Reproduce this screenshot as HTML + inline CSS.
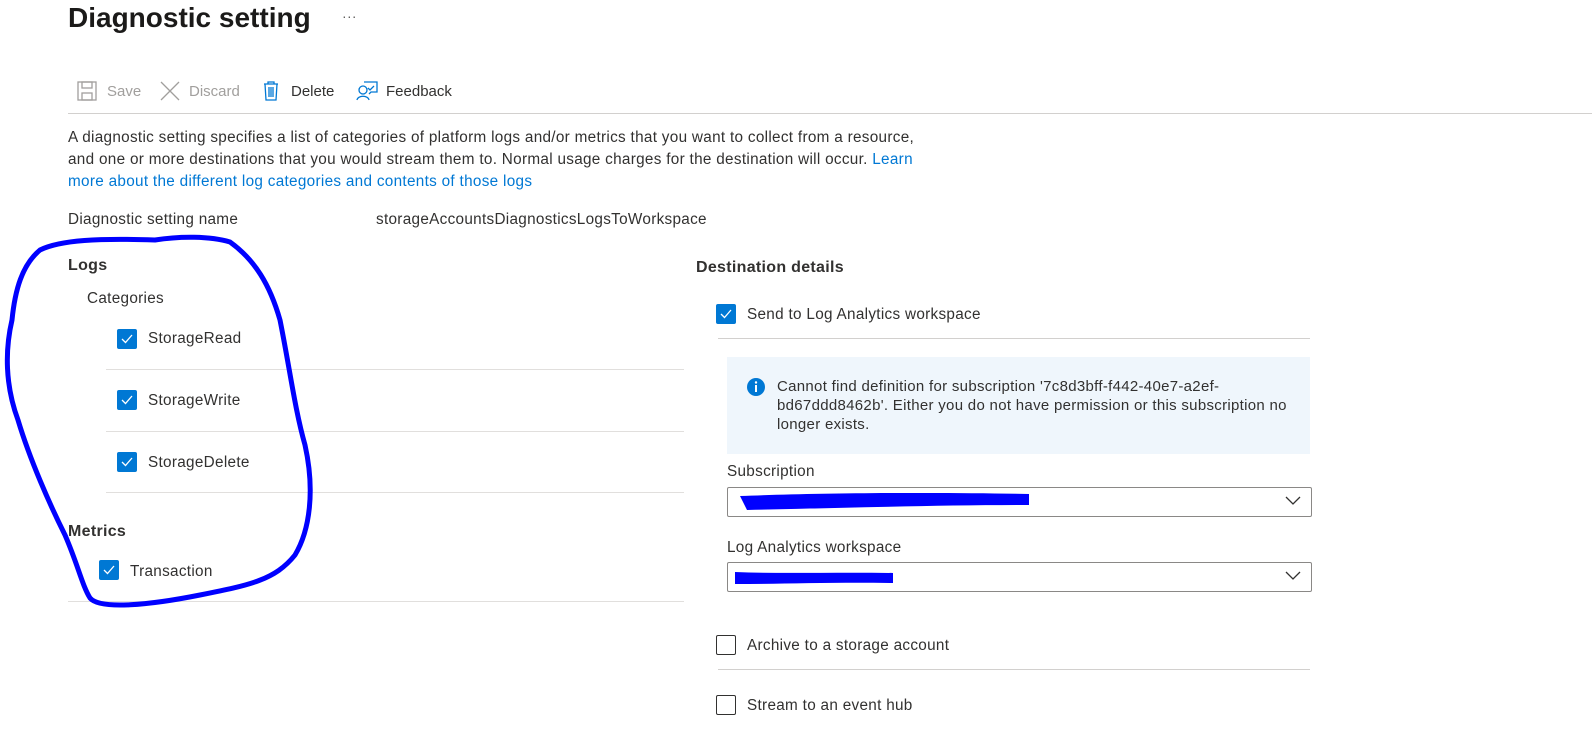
<!DOCTYPE html>
<html><head><style>
body{margin:0;width:1592px;height:734px;background:#fff;font-family:"Liberation Sans",sans-serif;color:#323130;position:relative;overflow:hidden;font-size:15.3px;letter-spacing:0.3px}
.a{position:absolute;white-space:nowrap}
.cb{position:absolute;width:20px;height:20px;background:#0078d4;border-radius:2px}
.cb svg{position:absolute;left:3px;top:3px}
.ub{position:absolute;width:18px;height:18px;border:1px solid #323130;border-radius:2px}
.hr{position:absolute;height:1px;background:#e1dfdd}
.sel{position:absolute;left:727px;width:583px;height:28px;border:1px solid #8a8886;border-radius:2px}
.t{letter-spacing:0;font-size:15px}
</style></head><body>
<div class="a" style="left:68px;top:2px;font-size:28px;font-weight:bold;color:#1b1a19;letter-spacing:0">Diagnostic setting</div>
<div class="a" style="left:342px;top:8px;font-size:14px;color:#605e5c">···</div>
<svg class="a" style="left:77px;top:81px" width="20" height="20" viewBox="0 0 20 20" fill="none" stroke="#a19f9d" stroke-width="1.3"><rect x="1" y="1" width="18" height="18"/><rect x="5" y="1" width="10" height="6"/><rect x="5" y="12" width="10" height="7"/></svg>
<div class="a t" style="left:107px;top:83px;color:#a19f9d">Save</div>
<svg class="a" style="left:160px;top:81px" width="20" height="20" stroke="#a19f9d" stroke-width="1.3"><path d="M1 1L19 19M19 1L1 19"/></svg>
<div class="a t" style="left:189px;top:83px;color:#a19f9d">Discard</div>
<svg class="a" style="left:263px;top:81px" width="16" height="20" fill="none" stroke="#0078d4" stroke-width="1.3"><path d="M1 3H15M5 3V1H11V3M2 3L3 19H13L14 3M6 6V16M8 6V16M10 6V16"/></svg>
<div class="a t" style="left:291px;top:83px">Delete</div>
<svg class="a" style="left:356px;top:81px" width="22" height="20" fill="none" stroke="#0078d4" stroke-width="1.3"><circle cx="7" cy="9" r="4"/><path d="M1 19C2 14 12 14 13 19M8 1H21V11H15L13 13"/><path d="M12 7L14 9L18 5"/></svg>
<div class="a t" style="left:386px;top:83px">Feedback</div>
<div class="hr" style="left:68px;top:113px;width:1524px;background:#d2d0ce"></div>
<div class="a" style="left:68px;top:127px;line-height:22px">A diagnostic setting specifies a list of categories of platform logs and/or metrics that you want to collect from a resource,<br>and one or more destinations that you would stream them to. Normal usage charges for the destination will occur. <span style="color:#0078d4">Learn</span><br><span style="color:#0078d4">more about the different log categories and contents of those logs</span></div>
<div class="a" style="left:68px;top:211px">Diagnostic setting name</div>
<div class="a" style="left:376px;top:211px">storageAccountsDiagnosticsLogsToWorkspace</div>
<div class="a" style="left:68px;top:257px;font-weight:bold;font-size:16px">Logs</div>
<div class="a" style="left:87px;top:290px">Categories</div>
<div class="cb" style="left:117px;top:329px"><svg width="14" height="14"><path d="M2 7L5.5 10.5L12 3" stroke="#fff" fill="none" stroke-width="1.3"/></svg></div>
<div class="a" style="left:148px;top:330px">StorageRead</div>
<div class="hr" style="left:106px;top:369px;width:578px"></div>
<div class="cb" style="left:117px;top:390px"><svg width="14" height="14"><path d="M2 7L5.5 10.5L12 3" stroke="#fff" fill="none" stroke-width="1.3"/></svg></div>
<div class="a" style="left:148px;top:392px">StorageWrite</div>
<div class="hr" style="left:106px;top:431px;width:578px"></div>
<div class="cb" style="left:117px;top:452px"><svg width="14" height="14"><path d="M2 7L5.5 10.5L12 3" stroke="#fff" fill="none" stroke-width="1.3"/></svg></div>
<div class="a" style="left:148px;top:454px">StorageDelete</div>
<div class="hr" style="left:106px;top:492px;width:578px"></div>
<div class="a" style="left:68px;top:523px;font-weight:bold;font-size:16px">Metrics</div>
<div class="cb" style="left:99px;top:560px"><svg width="14" height="14"><path d="M2 7L5.5 10.5L12 3" stroke="#fff" fill="none" stroke-width="1.3"/></svg></div>
<div class="a" style="left:130px;top:563px">Transaction</div>
<div class="hr" style="left:68px;top:601px;width:616px"></div>

<div class="a" style="left:696px;top:259px;font-weight:bold;font-size:16px">Destination details</div>
<div class="cb" style="left:716px;top:304px"><svg width="14" height="14"><path d="M2 7L5.5 10.5L12 3" stroke="#fff" fill="none" stroke-width="1.3"/></svg></div>
<div class="a" style="left:747px;top:306px">Send to Log Analytics workspace</div>
<div class="hr" style="left:718px;top:338px;width:592px;background:#d2d0ce"></div>
<div class="a" style="left:727px;top:357px;width:583px;height:97px;background:#eff6fc"></div>
<svg class="a" style="left:746px;top:377px" width="20" height="20"><circle cx="10" cy="10" r="9" fill="#0078d4"/><rect x="9" y="8" width="2" height="7" fill="#fff"/><circle cx="10" cy="5.5" r="1.2" fill="#fff"/></svg>
<div class="a" style="left:777px;top:377px;line-height:19px;font-size:15px">Cannot find definition for subscription '7c8d3bff-f442-40e7-a2ef-<br>bd67ddd8462b'. Either you do not have permission or this subscription no<br>longer exists.</div>
<div class="a" style="left:727px;top:463px">Subscription</div>
<div class="sel" style="top:487px"><svg style="position:absolute;right:10px;top:8px" width="16" height="10"><path d="M1 1L8 8L15 1" stroke="#323130" fill="none" stroke-width="1.3"/></svg></div>
<svg class="a" style="left:737px;top:490px" width="300" height="24"><path d="M3 6C80 3 200 2 292 4L292 15C200 15 100 18 10 20Z" fill="#0000ff"/></svg>
<div class="a" style="left:727px;top:539px">Log Analytics workspace</div>
<div class="sel" style="top:562px"><svg style="position:absolute;right:10px;top:8px" width="16" height="10"><path d="M1 1L8 8L15 1" stroke="#323130" fill="none" stroke-width="1.3"/></svg></div>
<svg class="a" style="left:733px;top:570px" width="165" height="16"><path d="M2 2C50 4 100 2 160 3L160 13C100 12 50 14 2 14Z" fill="#0000ff"/></svg>
<div class="ub" style="left:716px;top:635px"></div>
<div class="a" style="left:747px;top:637px">Archive to a storage account</div>
<div class="hr" style="left:718px;top:669px;width:592px;background:#d2d0ce"></div>
<div class="ub" style="left:716px;top:695px"></div>
<div class="a" style="left:747px;top:697px">Stream to an event hub</div>

<svg class="a" style="left:0;top:0" width="340" height="620" fill="none" stroke="#0000ff" stroke-width="5" stroke-linejoin="round" stroke-linecap="round"><path d="M155 240C180 236 210 236 230 242C255 260 270 285 280 320C290 370 295 410 305 445C315 490 310 530 295 555C275 580 250 585 200 595C150 605 100 610 90 598C82 585 78 565 65 535C50 505 30 460 18 420C5 385 5 350 12 320C15 290 22 265 40 250C60 240 100 238 155 240"/></svg>
</body></html>
